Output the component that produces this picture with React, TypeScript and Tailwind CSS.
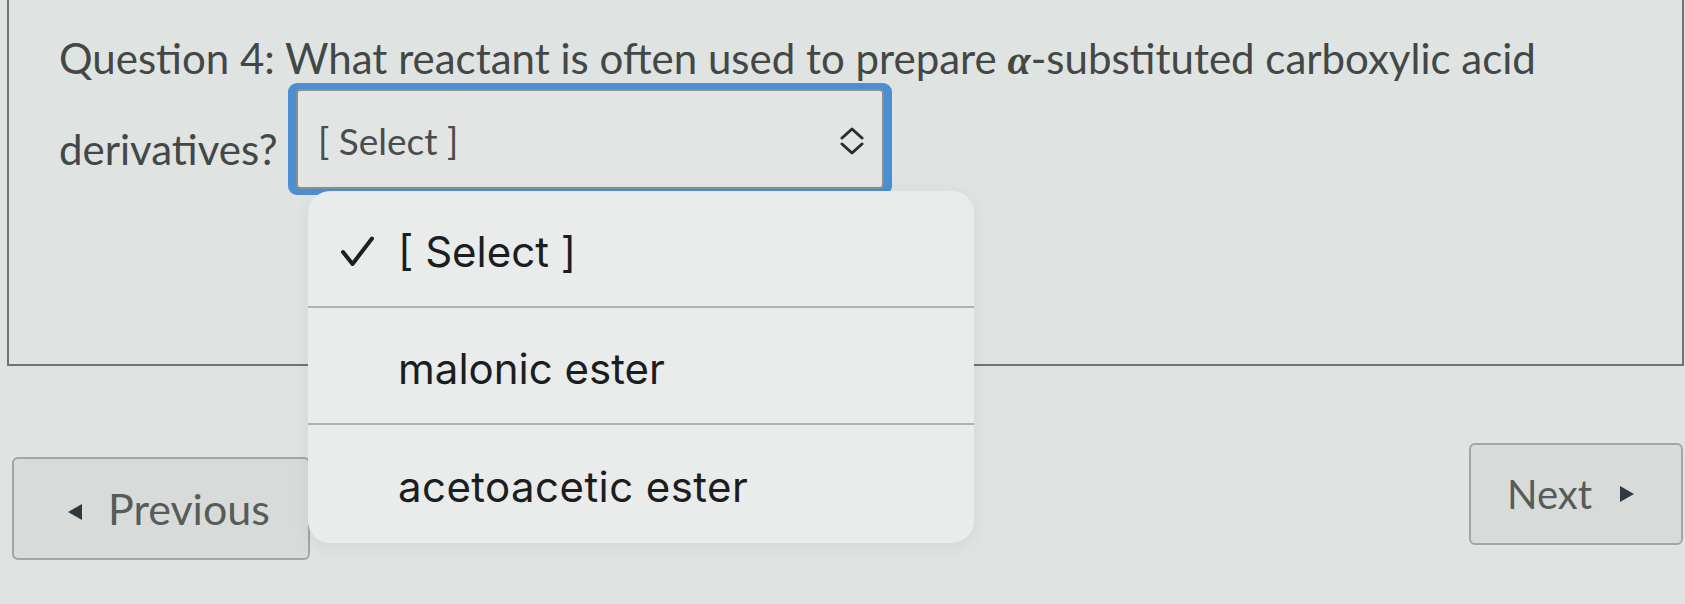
import React from "react";

const lato = { fontFamily: "Lato, 'Open Sans', sans-serif" } as const;

function UpDown() {
  return (
    <svg width="26" height="28" viewBox="0 0 26 28" fill="none">
      <path d="M3 11 L13 2 L23 11" stroke="#2b2d2e" strokeWidth="3" strokeLinecap="round" strokeLinejoin="round" />
      <path d="M3 17 L13 26 L23 17" stroke="#2b2d2e" strokeWidth="3" strokeLinecap="round" strokeLinejoin="round" />
    </svg>
  );
}

function Check() {
  return (
    <svg width="34" height="31" viewBox="0 0 34 31" fill="none">
      <path d="M3 16 L12.5 28 L32 2.5" stroke="#1d1f20" strokeWidth="4" strokeLinecap="round" strokeLinejoin="round" />
    </svg>
  );
}

function TriLeft() {
  return (
    <svg width="14" height="16" viewBox="0 0 14 16">
      <path d="M14 0 L0 8 L14 16 Z" fill="#2e3a40" />
    </svg>
  );
}

function TriRight() {
  return (
    <svg width="14" height="16" viewBox="0 0 14 16">
      <path d="M0 0 L14 8 L0 16 Z" fill="#2e3a40" />
    </svg>
  );
}

export default function App() {
  const items = ["[ Select ]", "malonic ester", "acetoacetic ester"];
  return (
    <div className="relative w-[1685px] h-[604px] overflow-hidden bg-[#dfe3e1]" style={lato}>
      {/* Question box */}
      <div className="ml-[7px] w-[1677px] h-[366px] border-l-2 border-r-2 border-b-2 border-[#6f7372] pl-[50px]">
        <div className="pt-[33px] text-[42px] leading-[1.2] text-[#434746] whitespace-nowrap">
          Question 4: What reactant is often used to prepare{" "}
          <span className="italic font-bold text-[42px]" style={{ fontFamily: "'Liberation Serif', 'DejaVu Serif', serif" }}>
            α
          </span>
          -substituted carboxylic acid
        </div>
        <div className="-mt-[2px] flex items-start">
          <div className="w-[229px] mt-[41px] text-[42px] leading-[1.2] text-[#434746] whitespace-nowrap">
            derivatives?
          </div>
          <div className="w-[604px] h-[112px] rounded-[9px] bg-[#4b8fd2] pl-[8px] pr-[8px] pt-[6px] pb-[6px]">
            <div className="h-[100px] rounded-[4px] border-2 border-[#8b8f8e] bg-[#e2e5e3] flex items-start justify-between pl-[20px] pr-[17px]">
              <div className="pt-[28px] text-[37px] leading-[1.2] text-[#4a4d4d] whitespace-nowrap">[ Select ]</div>
              <div className="mt-[36px]">
                <UpDown />
              </div>
            </div>
          </div>
        </div>
      </div>

      {/* Navigation buttons */}
      <div className="flex items-start justify-between pl-[12px] pr-[2px]">
        <div className="mt-[91px] w-[298px] h-[103px] rounded-[6px] border-2 border-[#a3a6a5] bg-[#d8dbda] flex items-center pl-[54px] gap-[26px]">
          <div className="mt-[6px]">
            <TriLeft />
          </div>
          <span className="text-[43px] leading-[1.2] text-[#575b5a]">Previous</span>
        </div>
        <div className="mt-[77px] w-[214px] h-[102px] rounded-[6px] border-2 border-[#a3a6a5] bg-[#d8dbda] flex items-center pl-[36px] gap-[28px]">
          <span className="text-[40px] leading-[1.2] text-[#575b5a]">Next</span>
          <TriRight />
        </div>
      </div>

      {/* Open dropdown menu */}
      <div
        className="absolute left-[308px] top-[191px] w-[666px] h-[352px] rounded-[22px] bg-[#e9ecea] shadow-[0_4px_18px_rgba(0,0,0,0.06)] flex flex-col"
        style={{ fontFamily: "Inter, 'Liberation Sans', sans-serif" }}
      >
        {items.map((t, i) => (
          <div
            key={t}
            className={
              "h-[117px] flex items-center pl-[32px] pt-[6px] " +
              (i < 2 ? "border-b-2 border-[#b0b3b2]" : "")
            }
          >
            <div className="w-[58px] flex items-center">{i === 0 ? <Check /> : null}</div>
            <span className={"text-[42px] leading-none text-[#1c1d1f] whitespace-nowrap " + (i === 2 ? "tracking-[0.01em]" : "")}>{t}</span>
          </div>
        ))}
      </div>
    </div>
  );
}
